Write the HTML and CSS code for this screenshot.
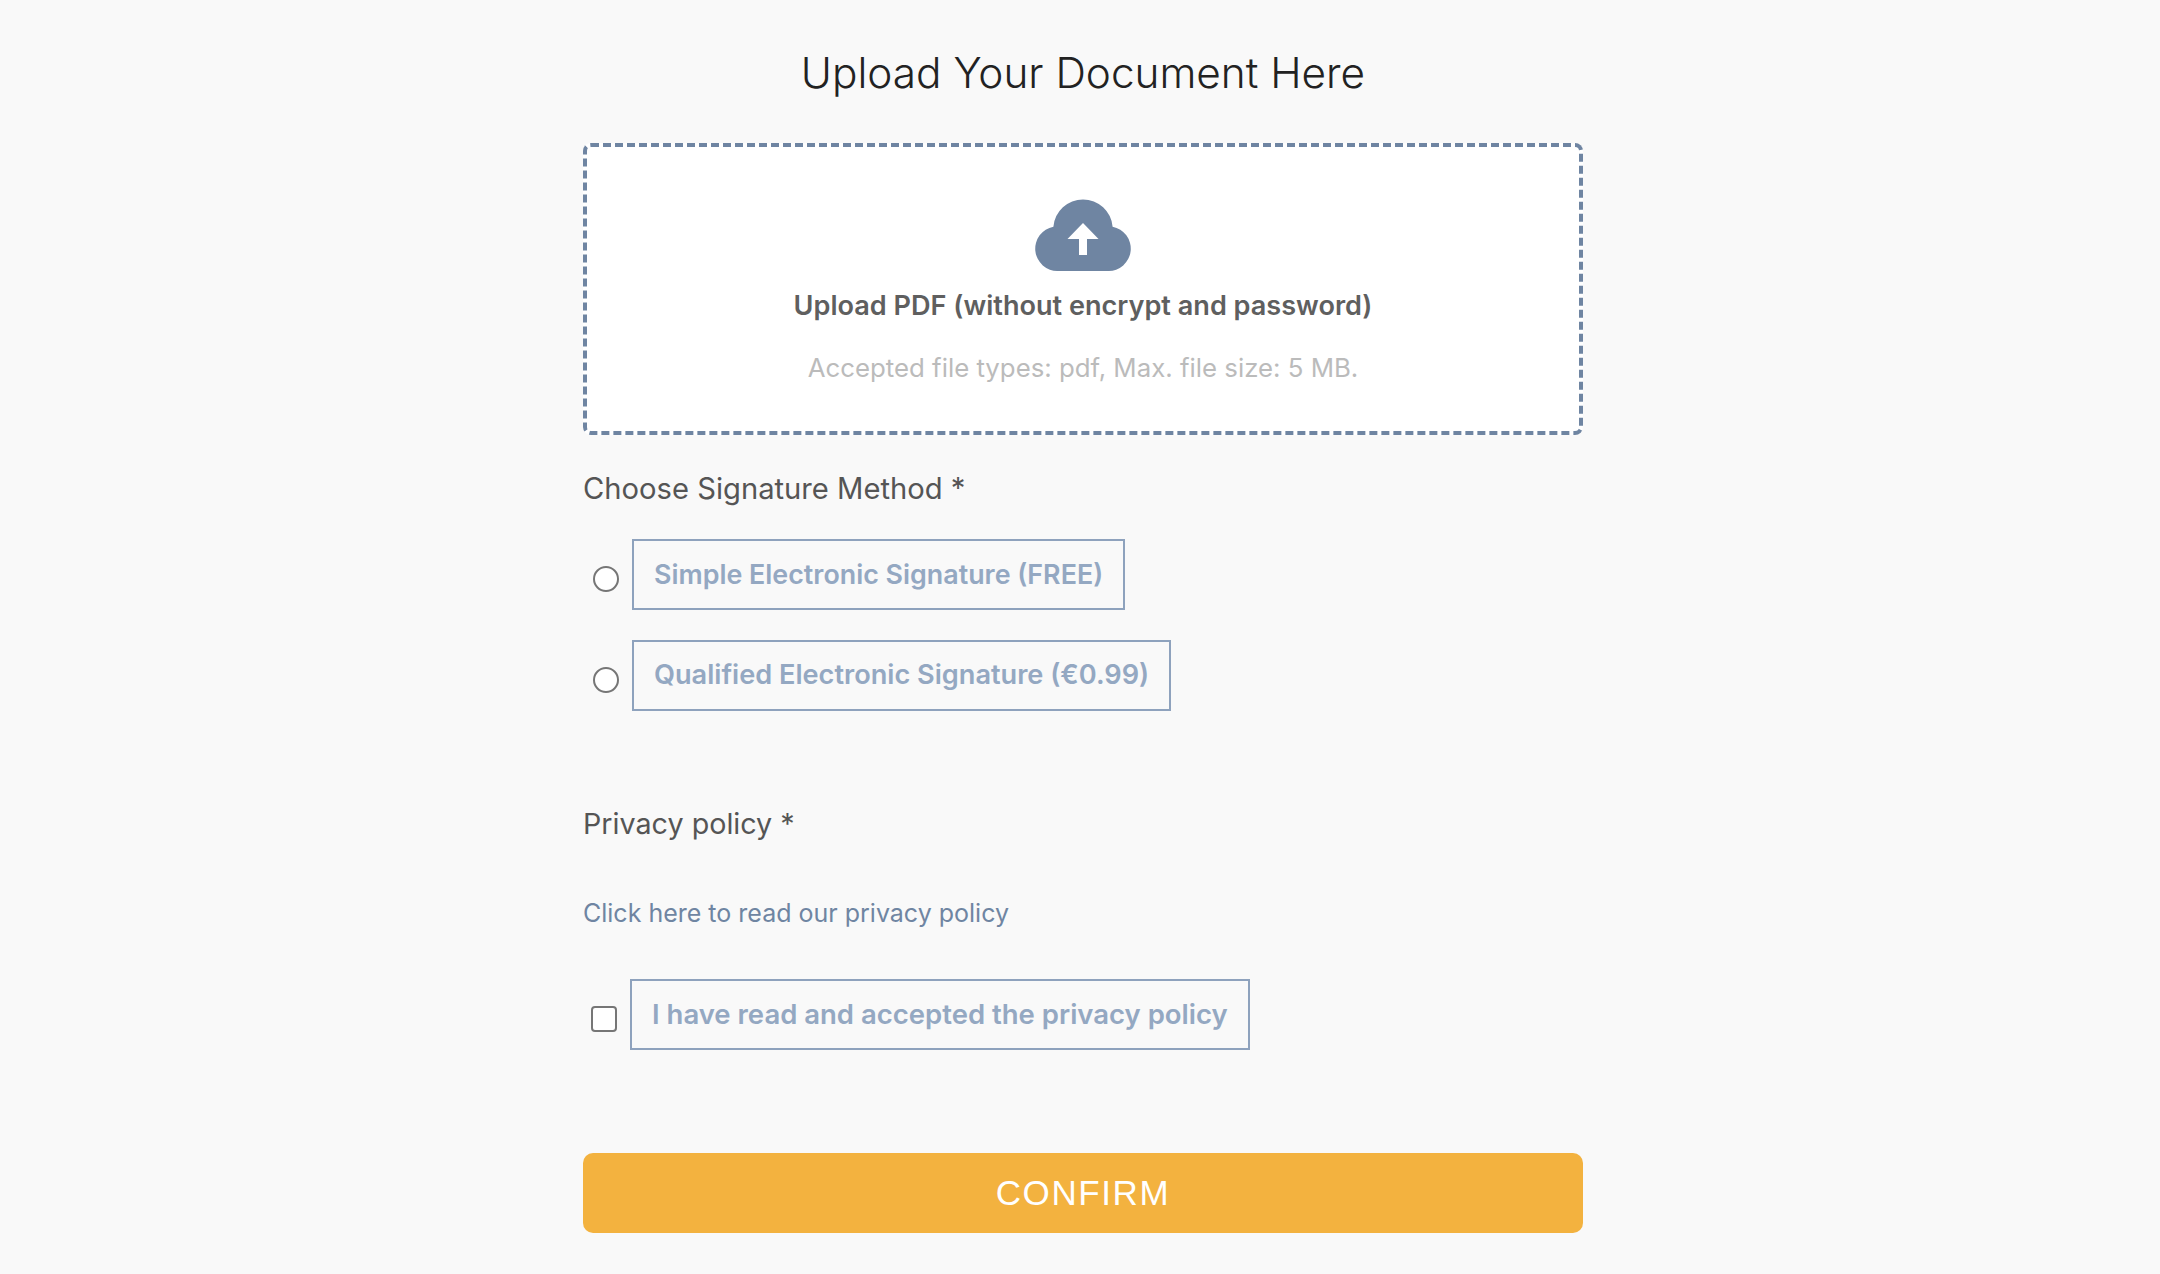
FILE: index.html
```html
<!DOCTYPE html>
<html lang="en">
<head>
    <meta charset="UTF-8">
    <title>Upload Your Document Here</title>
    <link rel="stylesheet" href="styles.css">
</head>
<body>
    <form class="container">
        <h1>Upload Your Document Here</h1>

        <div class="dropzone">
            <svg class="cloud" width="96" height="72" viewBox="0 0 96 72">
                <path fill="#6f85a2" d="M23 72A22.35 22.35 0 0 1 18.4 27.7A29.7 29.7 0 0 1 77.6 27.7A22.35 22.35 0 0 1 73 72Z"/>
                <path fill="#fff" d="M48 24L63.5 40H52V56H44V40H32.5Z"/>
            </svg>
            <div class="dropzone-title">Upload PDF (without encrypt and password)</div>
            <div class="dropzone-hint">Accepted file types: pdf, Max. file size: 5 MB.</div>
        </div>

        <div class="field-label method-label">Choose Signature Method *</div>
        <div class="option option-simple">
            <input type="radio" name="method" id="simple">
            <label for="simple">Simple Electronic Signature (FREE)</label>
        </div>
        <div class="option option-qualified">
            <input type="radio" name="method" id="qualified">
            <label for="qualified">Qualified Electronic Signature (€0.99)</label>
        </div>

        <div class="field-label privacy-label">Privacy policy *</div>
        <a class="privacy-link" href="#">Click here to read our privacy policy</a>
        <div class="option option-check">
            <input type="checkbox" id="accept">
            <label for="accept">I have read and accepted the privacy policy</label>
        </div>

        <button type="button" class="confirm">CONFIRM</button>
    </form>
</body>
</html>
```

FILE: styles.css
```css
body {
    margin: 0;
    padding-left: 6px;
    height: 1274px;
    box-sizing: border-box;
    overflow: hidden;
    background-color: #f9f9f9;
    font-family: Inter, "Open Sans", sans-serif;
    color: #555;
}
.container {
    width: 1000px;
    margin: 0 auto;
    padding-top: 43px;
}
h1 {
    margin: 0 0 40px;
    font-size: 42.3px;
    font-weight: 300;
    line-height: 60px;
    text-align: center;
    color: #222;
}
.dropzone {
    height: 292px;
    box-sizing: border-box;
    padding-top: 52px;
    border: 4px dashed #6f85a2;
    border-radius: 8px;
    background-color: #fff;
    text-align: center;
}
.cloud {
    display: block;
    margin: 0 auto 15px;
}
.dropzone-title {
    font-size: 27.1px;
    font-weight: 600;
    line-height: 40px;
    color: #5f5f5f;
}
.dropzone-hint {
    margin-top: 22px;
    font-size: 25.8px;
    line-height: 40px;
    color: #bbb;
}
.field-label {
    line-height: 40px;
}
.method-label {
    margin-top: 34px;
    font-size: 29.2px;
}
.privacy-label {
    margin-top: 93px;
    font-size: 28.7px;
}
.option {
    display: flex;
    align-items: center;
    gap: 13px;
    margin-top: 30px;
}
.option input {
    appearance: none;
    width: 26px;
    height: 26px;
    box-sizing: border-box;
    margin: 8px 0 0 10px;
    flex: none;
    border: 2px solid #767676;
    background-color: #fff;
}
.option input[type="radio"] {
    border-radius: 50%;
}
.option input[type="checkbox"] {
    margin-left: 8px;
    border-radius: 4px;
}
.option label {
    height: 71px;
    box-sizing: border-box;
    padding: 0 20px;
    border: 2px solid #8ea2bd;
    font-size: 27px;
    font-weight: 600;
    line-height: 66px;
    color: #94a8c2;
}
.option-simple label {
    font-size: 26.85px;
}
.option-qualified label {
    font-size: 27.15px;
}
.option-check {
    margin-top: 46px;
}
.option-check label {
    font-size: 27.5px;
}
.privacy-link {
    display: block;
    margin-top: 49px;
    font-size: 25px;
    line-height: 40px;
    color: #6f85a2;
    text-decoration: none;
}
.confirm {
    display: block;
    width: 100%;
    height: 80px;
    margin-top: 103px;
    border: none;
    border-radius: 10px;
    background-color: #f3b23f;
    color: #fff;
    font-family: "Liberation Sans", Arial, sans-serif;
    font-size: 35px;
    letter-spacing: 1.6px;
}
```
